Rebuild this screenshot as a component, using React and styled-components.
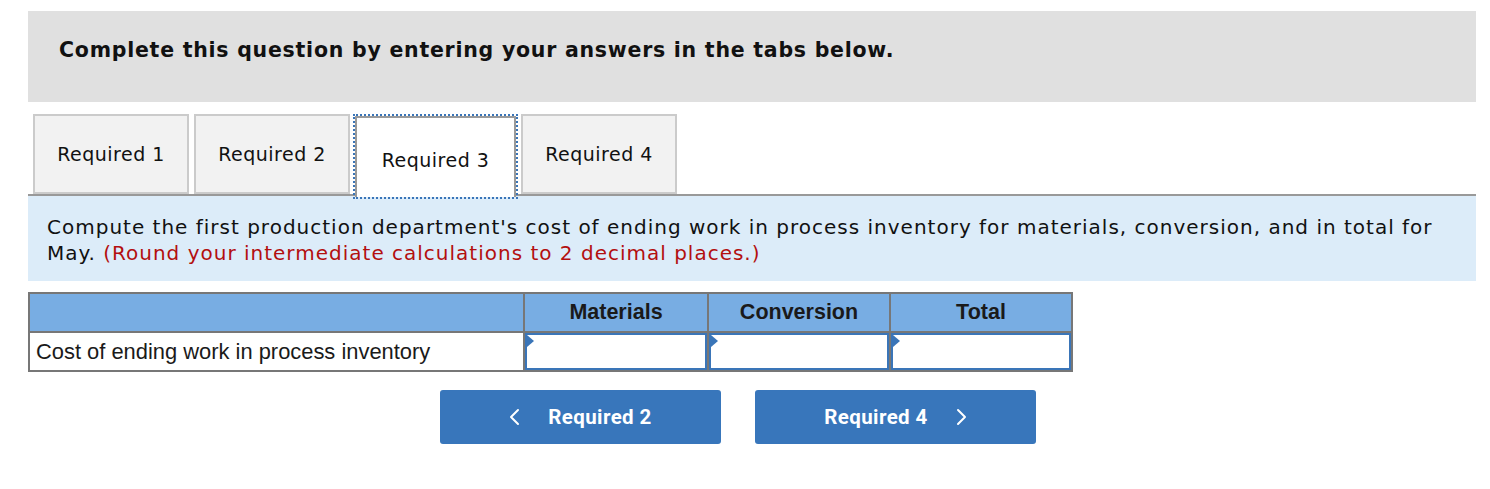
import styled, { createGlobalStyle } from 'styled-components'

const Global = createGlobalStyle`
  body {
    margin: 0;
    background: #fff;
    font-family: "DejaVu Sans", Verdana, sans-serif;
    color: #111;
  }
`

const Page = styled.div`
  padding: 11px 14px 0 28px;
`

const Banner = styled.div`
  height: 91px;
  background: #e0e0e0;
  display: flex;
  align-items: center;
  padding: 0 0 13px 31px;
  box-sizing: border-box;
`

const Title = styled.h1`
  margin: 0;
  font-size: 20.5px;
  font-weight: bold;
  letter-spacing: 0.75px;
`

const TabBar = styled.div`
  margin-top: 12px;
  padding-left: 5px;
  display: flex;
  align-items: flex-end;
  gap: 5px;
  border-bottom: 2px solid #999;
  height: 80px;
`

const Tab = styled.div`
  width: ${p => (p.$active ? 161 : 156)}px;
  height: ${p => (p.$active ? 81 : 80)}px;
  box-sizing: border-box;
  display: flex;
  align-items: center;
  justify-content: center;
  font-size: 19px;
  letter-spacing: 0.5px;
  padding-top: ${p => (p.$active ? 4 : 0)}px;
  background: ${p => (p.$active ? '#fff' : '#f2f2f2')};
  border: 2px solid ${p => (p.$active ? '#9a9a9a' : '#cbcbcb')};
  border-bottom: ${p => (p.$active ? 'none' : '2px solid #cbcbcb')};
  margin-bottom: ${p => (p.$active ? -3 : 0)}px;
  outline: ${p => (p.$active ? '2px dotted #3a75b8' : 'none')};
  outline-offset: 0;
  position: relative;
  z-index: ${p => (p.$active ? 1 : 0)};
`

const Info = styled.div`
  background: #dcecf9;
  padding: 18px 19px 15px;
  font-size: 20px;
  letter-spacing: 1px;
  line-height: 26px;
`

const Note = styled.span`
  color: #b30f0f;
`

const Table = styled.table`
  margin-top: 11px;
  border-collapse: collapse;
  table-layout: fixed;
  font-family: "Liberation Sans", Arial, sans-serif;
  font-size: 21.5px;
`

const Th = styled.th`
  background: #78ade3;
  border: 2px solid #777;
  height: 37px;
  padding: 0;
  font-weight: bold;
  color: #1a1a1a;
  width: ${p => p.$w}px;
`

const Label = styled.td`
  border: 2px solid #777;
  height: 37px;
  padding: 0 6px;
  color: #1a1a1a;
  font-size: 21.9px;
  white-space: nowrap;
`

const Cell = styled.td`
  border: 2px solid #777;
  padding: 0;
  height: 37px;
`

const InputBox = styled.div`
  position: relative;
  height: 37px;
  box-sizing: border-box;
  border: 2px solid #3a75b8;
  background: #fff;
  &::before {
    content: '';
    position: absolute;
    left: 0;
    top: 0;
    border-left: 7px solid #3a75b8;
    border-top: 6px solid transparent;
    border-bottom: 6px solid transparent;
  }
`

const Nav = styled.div`
  margin: 18px 0 0 412px;
  display: flex;
  gap: 34px;
`

const NavButton = styled.button`
  width: 281px;
  height: 54px;
  border: none;
  border-radius: 3px;
  background: #3876bb;
  color: #fff;
  font-family: Roboto, "Noto Sans", sans-serif;
  font-weight: bold;
  font-size: 20.5px;
  letter-spacing: 0.4px;
  display: flex;
  align-items: center;
  justify-content: center;
  gap: 28px;
  padding: 0;
  cursor: pointer;
`

const Chevron = ({ dir }) => (
  <svg width="11" height="18" viewBox="0 0 11 18" fill="none">
    <path
      d={dir === 'left' ? 'M9 2 L2 9 L9 16' : 'M2 2 L9 9 L2 16'}
      stroke="#fff"
      strokeWidth="2"
      strokeLinecap="round"
      strokeLinejoin="round"
    />
  </svg>
)

export default function App() {
  const tabs = ['Required 1', 'Required 2', 'Required 3', 'Required 4']
  return (
    <Page>
      <Global />
      <Banner>
        <Title>Complete this question by entering your answers in the tabs below.</Title>
      </Banner>
      <TabBar>
        {tabs.map(t => (
          <Tab key={t} $active={t === 'Required 3'}>{t}</Tab>
        ))}
      </TabBar>
      <Info>
        Compute the first production department's cost of ending work in process inventory for materials, conversion, and in total for May.{' '}
        <Note>(Round your intermediate calculations to 2 decimal places.)</Note>
      </Info>
      <Table>
        <thead>
          <tr>
            <Th $w={493}></Th>
            <Th $w={182}>Materials</Th>
            <Th $w={180}>Conversion</Th>
            <Th $w={180}>Total</Th>
          </tr>
        </thead>
        <tbody>
          <tr>
            <Label>Cost of ending work in process inventory</Label>
            <Cell><InputBox /></Cell>
            <Cell><InputBox /></Cell>
            <Cell><InputBox /></Cell>
          </tr>
        </tbody>
      </Table>
      <Nav>
        <NavButton><Chevron dir="left" />Required 2</NavButton>
        <NavButton>Required 4<Chevron dir="right" /></NavButton>
      </Nav>
    </Page>
  )
}
